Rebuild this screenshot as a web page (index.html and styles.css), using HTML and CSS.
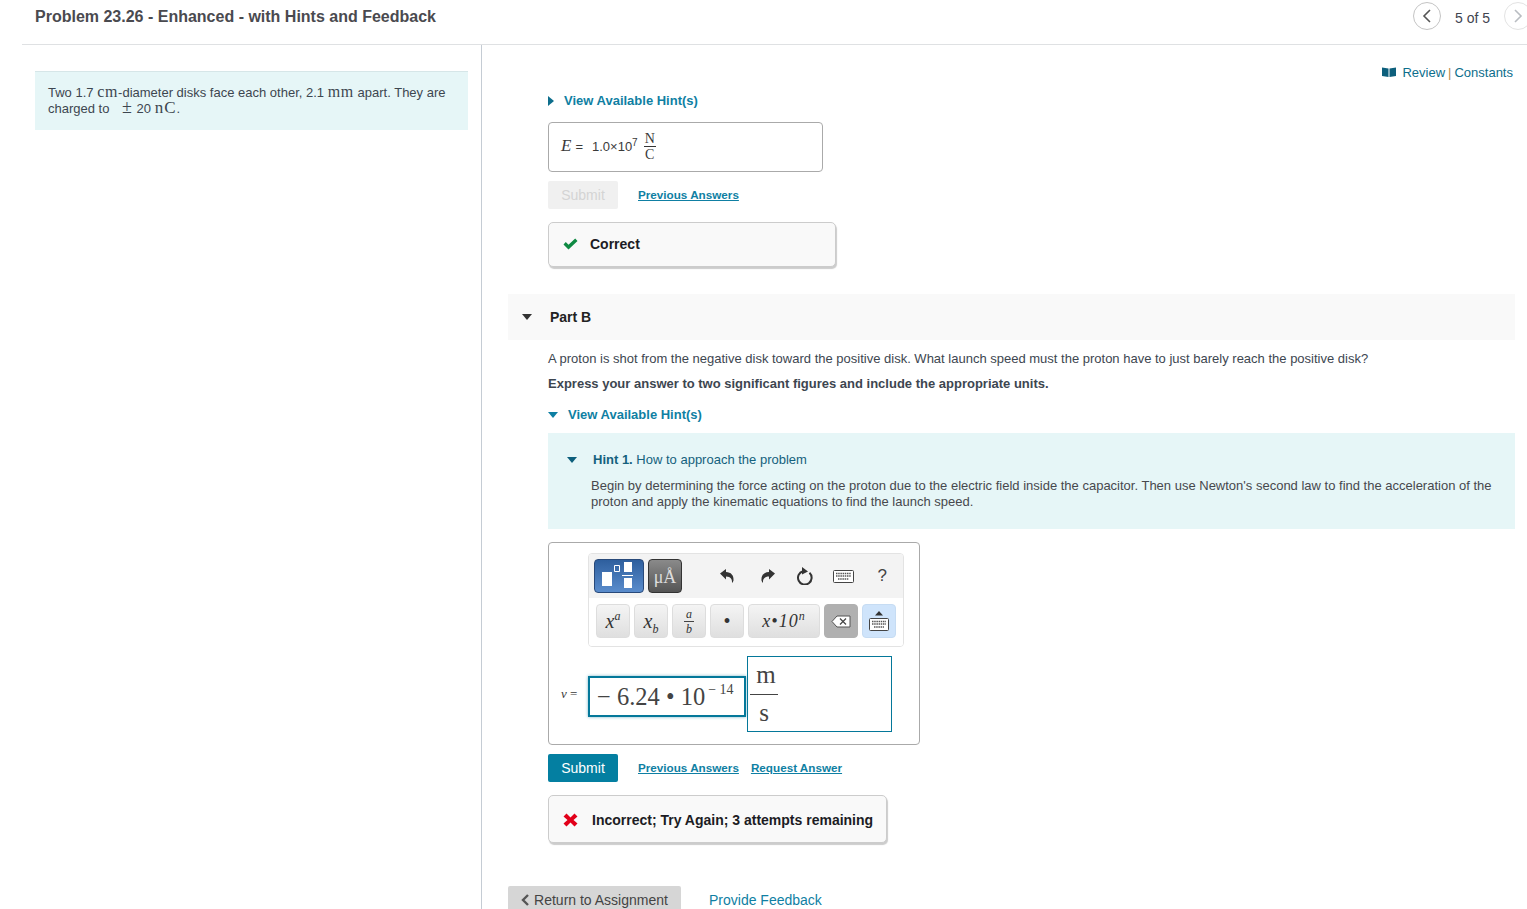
FILE: index.html
```html
<!DOCTYPE html>
<html lang="en">
<head>
<meta charset="utf-8">
<title>Problem 23.26</title>
<link rel="stylesheet" href="styles.css">
</head>
<body>
<div class="page">
  <header class="top">
    <h1 class="title">Problem 23.26 - Enhanced - with Hints and Feedback</h1>
    <nav class="pager">
      <span class="round"><svg width="10" height="14" viewBox="0 0 10 14"><path d="M8 1 2 7l6 6" fill="none" stroke="#555" stroke-width="1.6"/></svg></span>
      <span class="count">5 of 5</span>
      <span class="round faded"><svg width="10" height="14" viewBox="0 0 10 14"><path d="m2 1 6 6-6 6" fill="none" stroke="#b9bdc2" stroke-width="1.6"/></svg></span>
    </nav>
  </header>
  <div class="main">
    <aside class="left">
      <div class="problem">Two 1.7 <span class="cm">cm</span>-diameter disks face each other, 2.1 <span class="cm">mm</span> apart. They are<br>charged to <span class="pm">±</span> 20 <span class="cm big">nC</span>.</div>
    </aside>
    <section class="right">
      <div class="review">
        <svg class="book" width="14" height="10" viewBox="0 0 14 10"><path d="M0 .5 6.500 1.500V10L0 9zM14 .5 7.500 1.500V10L14 9z" fill="#0d5f7c"/></svg>
        <a class="link">Review</a> <span class="pipe">|</span> <a class="link">Constants</a>
      </div>
      <div class="indent">
        <div class="hintlink closed"><span class="tri-right"></span>View Available Hint(s)</div>
        <div class="answer-a">
          <i class="m-i">E</i><span class="eq">=</span><span class="val">1.0×10<sup>7</sup></span>
          <span class="frac-a"><span class="fn">N</span><span class="fd">C</span></span>
        </div>
        <div class="actions first">
          <span class="btn off">Submit</span>
          <a class="act">Previous Answers</a>
        </div>
        <div class="feedback ok">
          <svg width="15" height="12" viewBox="0 0 15 12"><path d="M.5 6.500 2.800 4 5.500 6.800 12.200.5 14.500 3 5.500 11.500z" fill="#0f8a43"/></svg>
          <b>Correct</b>
        </div>
      </div>
      <div class="part"><span class="tri-down dark"></span><b>Part B</b></div>
      <div class="indent">
        <p class="q">A proton is shot from the negative disk toward the positive disk. What launch speed must the proton have to just barely reach the positive disk?</p>
        <p class="q strong">Express your answer to two significant figures and include the appropriate units.</p>
        <div class="hintlink open"><span class="tri-down teal"></span>View Available Hint(s)</div>
        <div class="hint">
          <div class="hint-head"><span class="tri-down deep"></span><b>Hint 1.</b>&nbsp;How to approach the problem</div>
          <div class="hint-body">Begin by determining the force acting on the proton due to the electric field inside the capacitor. Then use Newton's second law to find the acceleration of the proton and apply the kinematic equations to find the launch speed.</div>
        </div>
        <div class="editor">
          <div class="tools">
            <div class="tool-top">
              <span class="tb tb-blue">
                <svg width="38" height="30" viewBox="0 0 38 30"><path d="M2 11h10v14H2z" fill="#fff"/><path d="M14.500 4.500h5v6h-5z" fill="none" stroke="#fff"/><path d="M24 1h8v10h-8zM24 17h8v10h-8z" fill="#fff"/><path d="M22 14.500h11" stroke="#fff"/></svg>
              </span>
              <span class="tb tb-grey">μÅ</span>
              <span class="ic first-ic"><svg width="16" height="16" viewBox="0 0 16 16"><path d="M0 5.500 6 1v3c5 0 8 3.500 7.500 8.500-.3 1-.8 2-1.500 2.500.3-3.500-1-6.500-6-6.500v3z" fill="#333"/></svg></span>
              <span class="ic"><svg width="16" height="16" viewBox="0 0 16 16"><path d="M16 5.500 10 1v3c-5 0-8 3.500-7.500 8.500.3 1 .8 2 1.500 2.500-.3-3.500 1-6.500 6-6.500v3z" fill="#333"/></svg></span>
              <span class="ic"><svg width="18" height="18" viewBox="0 0 18 18"><path d="M7 4.200A6.800 6.800 0 1 0 13.500 5.800" fill="none" stroke="#333" stroke-width="2"/><path d="M6 0l6 4.500L6 7.500z" fill="#333"/></svg></span>
              <span class="ic"><svg width="21" height="13" viewBox="0 0 21 13"><rect x=".5" y=".5" width="20" height="12" rx="1" fill="#fff" stroke="#444"/><path d="M3 3.500h15M3 6h15M5 9h11" stroke="#555" stroke-width="1.500" stroke-dasharray="1.500 .7"/></svg></span>
              <span class="ic help">?</span>
            </div>
            <div class="tool-bottom">
              <span class="key w34"><i>x<sup>a</sup></i></span>
              <span class="key w34"><i>x<sub>b</sub></i></span>
              <span class="key w34"><span class="mini-frac"><i>a</i><i>b</i></span></span>
              <span class="key w34">•</span>
              <span class="key w72"><i>x•10<sup>n</sup></i></span>
              <span class="key w34 del"><svg width="20" height="13" viewBox="0 0 20 13"><path d="M6 1h13v11H6L1 6.500z" fill="#fff" stroke="#555"/><path d="m9 3.500 6 6M15 3.500l-6 6" stroke="#444" stroke-width="1.200"/></svg></span>
              <span class="key w34 kbd"><svg width="20" height="22" viewBox="0 0 20 22"><path d="M6 5.500 10 1l4 4.500z" fill="#333"/><rect x=".5" y="8.500" width="19" height="12" rx="1" fill="#fff" stroke="#444"/><path d="M3 11.500h14M3 14h14M5 17h10" stroke="#555" stroke-width="1.500" stroke-dasharray="1.500 .7"/></svg></span>
            </div>
          </div>
          <div class="entry">
            <span class="var"><i>v</i> =</span>
            <span class="input">− 6.24 • 10<sup>− 14</sup></span>
            <span class="units"><span class="ufrac"><span class="un">m</span><span class="ud">s</span></span></span>
          </div>
        </div>
        <div class="actions second">
          <span class="btn on">Submit</span>
          <a class="act">Previous Answers</a>
          <a class="act">Request Answer</a>
        </div>
        <div class="feedback bad">
          <svg width="15" height="14" viewBox="0 0 15 14"><path d="M3.500.5 7.500 4.500 11.500.5 14.500 3.500 10.500 7 14.500 10.500 11.500 13.500 7.500 9.500 3.500 13.500.5 10.500 4.500 7 .5 3.500z" fill="#e2001a"/></svg>
          <b>Incorrect; Try Again; 3 attempts remaining</b>
        </div>
      </div>
      <div class="foot">
        <span class="return"><svg width="9" height="12" viewBox="0 0 9 12"><path d="M7 1 2 6l5 5" fill="none" stroke="#555" stroke-width="2.400"/></svg>Return to Assignment</span>
        <a class="provide">Provide Feedback</a>
      </div>
    </section>
  </div>
</div>
</body>
</html>
```
FILE: styles.css
```css
* { box-sizing: border-box; }
html, body { margin: 0; height: 909px; overflow: hidden; background: #fff; }
body { font-family: "Liberation Sans", Arial, sans-serif; font-size: 12px; color: #3a3a3a; }
.page { width: 1527px; height: 909px; overflow: hidden; }
.top { height: 45px; margin-left: 22px; border-bottom: 1px solid #dfe1e3; display: flex; justify-content: space-between; padding: 0 0 0 13px; }
.title { margin: 8px 0 0; font-size: 16px; line-height: 18px; font-weight: 700; color: #4a4a4f; }
.pager { display: flex; align-items: flex-start; padding-top: 2px; margin-right: -1px; }
.round { width: 28px; height: 28px; border: 1px solid #c4c4c4; border-radius: 50%; display: flex; align-items: center; justify-content: center; background: #fff; }
.round.faded { border-color: #e3e3e3; margin-right: -4px; }
.count { width: 63px; text-align: center; font-size: 14px; line-height: 32px; color: #3f4550; }
.main { display: flex; height: 864px; }
.left { width: 482px; flex: none; border-right: 1px solid #c5ccd4; padding: 26px 13px 0 35px; }
.problem { height: 59px; background: #e6f6f7; border-top: 1px solid #d6e6e8; padding: 13px 13px 0; font-size: 13px; line-height: 16px; color: #3d4650; white-space: nowrap; }
.cm { font-family: "Liberation Serif", serif; font-size: 16px; letter-spacing: .7px; line-height: 0; }
.cm.big { font-size: 17px; letter-spacing: 1px; }
.pm { font-family: "Liberation Serif", serif; margin-left: 9px; font-size: 18px; line-height: 0; letter-spacing: 1px; }
.right { flex: 1; padding: 0 12px 0 26px; min-width: 0; }
.review { height: 20px; margin-top: 17px; display: flex; justify-content: flex-end; align-items: center; gap: 3px; padding-right: 2px; font-size: 13px; }
.book { margin-right: 3px; }
.link { color: #0d6e8c; }
.pipe { color: #b98a4a; }
.indent { padding-left: 40px; }
.hintlink { font-size: 13px; font-weight: 700; line-height: 16px; color: #0f7fa3; display: flex; align-items: center; }
.hintlink.closed { margin-top: 11px; }
.tri-right { width: 0; height: 0; border-left: 6px solid #0d6e8c; border-top: 5.500px solid transparent; border-bottom: 5.500px solid transparent; margin-right: 10px; }
.tri-down { width: 0; height: 0; border-top: 6px solid #333; border-left: 5.500px solid transparent; border-right: 5.500px solid transparent; display: block; }
.tri-down.teal { border-top-color: #0d7fa3; margin-right: 10px; }
.tri-down.deep { border-top-color: #0d5f7c; }
.answer-a { margin-top: 13px; width: 275px; height: 50px; border: 1px solid #aaa; border-radius: 4px; display: flex; align-items: center; padding-left: 12px; color: #3a3a3a; }
.m-i { font-family: "Liberation Serif", serif; font-size: 17px; margin-bottom: 2px; }
.eq { margin: 0 9px 2px 4px; font-size: 13px; }
.val { font-size: 13px; margin-bottom: 2px; }
.val sup { font-size: 10px; line-height: 0; }
.frac-a { display: inline-flex; flex-direction: column; margin-left: 6px; font-family: "Liberation Serif", serif; font-size: 14px; line-height: 14px; text-align: center; }
.fn { border-bottom: 1px solid #333; padding: 0 1px; }
.fd { padding-top: 1px; }
.actions { display: flex; align-items: center; }
.actions.first { margin-top: 9px; }
.actions.second { margin-top: 9px; }
.btn { width: 70px; height: 28px; border-radius: 2px; display: flex; align-items: center; justify-content: center; font-size: 14px; }
.btn.off { background: #f0f0f0; color: #d4d4d4; }
.btn.on { background: #047fa1; color: #fff; }
.act { font-size: 11.700px; font-weight: 700; color: #0f7fa3; text-decoration: underline; margin: 0 0 2px 20px; }
.act + .act { margin-left: 12px; }
.feedback { background: #f9f9f9; border: 1px solid #ccc; border-radius: 5px; box-shadow: 1px 2px 1px #ccc; display: flex; align-items: center; font-size: 14px; color: #1c1c24; }
.feedback.ok { margin-top: 13px; width: 288px; height: 45px; padding: 0 0 2px 14px; gap: 12px; }
.feedback.bad { margin-top: 13px; width: 339px; height: 48px; padding: 1px 0 0 14px; gap: 14px; }
.part { margin-top: 27px; height: 46px; background: #f9f9f9; display: flex; align-items: center; gap: 18px; padding-left: 14px; font-size: 14px; color: #222; }
.q { margin: 11px 0 0; font-size: 13px; line-height: 16px; color: #3d4650; }
.q.strong { margin-top: 9px; font-weight: 700; }
.hintlink.open { margin-top: 15px; }
.hint { margin-top: 10px; height: 96px; background: #e6f6f7; padding: 19px 20px 0 19px; font-size: 13px; color: #14617d; }
.hint-head { display: flex; align-items: center; line-height: 16px; }
.hint-head .tri-down { margin-right: 16px; }
.hint-body { margin: 10px 0 0 24px; line-height: 16px; color: #47484d; }
.editor { margin-top: 13px; width: 372px; height: 203px; border: 1px solid #aaa; border-radius: 4px; padding: 10px 15px 0 39px; }
.tools { width: 316px; height: 94px; border: 1px solid #e3e3e3; border-radius: 4px; overflow: hidden; }
.tool-top { height: 44px; background: #f3f3f3; display: flex; align-items: center; padding-left: 5px; }
.tb { height: 34px; border-radius: 4px; display: flex; align-items: center; justify-content: center; border: 1px solid #333; }
.tb-blue { width: 50px; background: linear-gradient(#2e5f9e, #5a8ccc); border-color: #28497a; }
.tb-grey { width: 34px; margin-left: 4px; padding-top: 3px; background: linear-gradient(#8a8a8a, #555); color: #ddd; font-family: "Liberation Serif", serif; font-size: 18px; }
.ic { width: 38.500px; display: flex; justify-content: center; align-items: center; }
.first-ic { margin-left: 27px; }
.help { font-size: 17px; color: #444; }
.tool-bottom { height: 48px; background: #fff; display: flex; gap: 4px; padding: 6px 0 0 7px; }
.key { height: 34px; border-radius: 4px; background: linear-gradient(#f4f4f4, #dfdfdf); border: 1px solid #ddd; display: flex; align-items: center; justify-content: center; font-family: "Liberation Serif", serif; font-size: 20px; color: #333; }
.w34 { width: 34px; }
.w72 { width: 72px; letter-spacing: 1px; font-size: 18px; }
.key sup, .key sub { font-size: 12px; line-height: 0; }
.del { background: #b0b0b0; border-color: #b0b0b0; }
.kbd { background: #cfe4fb; border-color: #c6dcf3; }
.mini-frac { display: inline-flex; flex-direction: column; font-size: 12px; line-height: 14px; text-align: center; }
.mini-frac i:first-child { border-bottom: 1px solid #444; padding: 0 2px; }
.entry { display: flex; align-items: center; margin-top: 9px; margin-left: -39px; height: 76px; font-family: "Liberation Serif", serif; }
.var { width: 39px; padding-left: 12px; font-size: 13px; white-space: nowrap; }
.input { width: 158px; height: 41px; margin-top: 5px; border: 2px solid #04789a; box-shadow: 0 0 3px #7bb6c9; display: flex; align-items: center; padding-left: 7px; font-size: 24.500px; color: #444; white-space: nowrap; }
.input sup { font-size: 14px; margin: -14px 0 0 3px; }
.units { width: 145px; height: 76px; border: 1px solid #04789a; margin-left: 1px; padding-left: 2px; display: flex; font-size: 25px; color: #444; }
.ufrac { display: flex; flex-direction: column; align-items: center; width: 28px; }
.un { height: 38px; width: 100%; padding-left: 4px; text-align: center; border-bottom: 1px solid #444; line-height: 36px; }
.ud { line-height: 36px; }
.foot { margin-top: 43px; display: flex; align-items: flex-start; gap: 28px; font-size: 14px; }
.return { width: 173px; height: 30px; padding-bottom: 3px; background: #d6d6d6; color: #444; display: flex; align-items: center; justify-content: center; gap: 4px; border-radius: 2px 2px 0 0; }
.provide { color: #0f7fa3; line-height: 29px; }
```
